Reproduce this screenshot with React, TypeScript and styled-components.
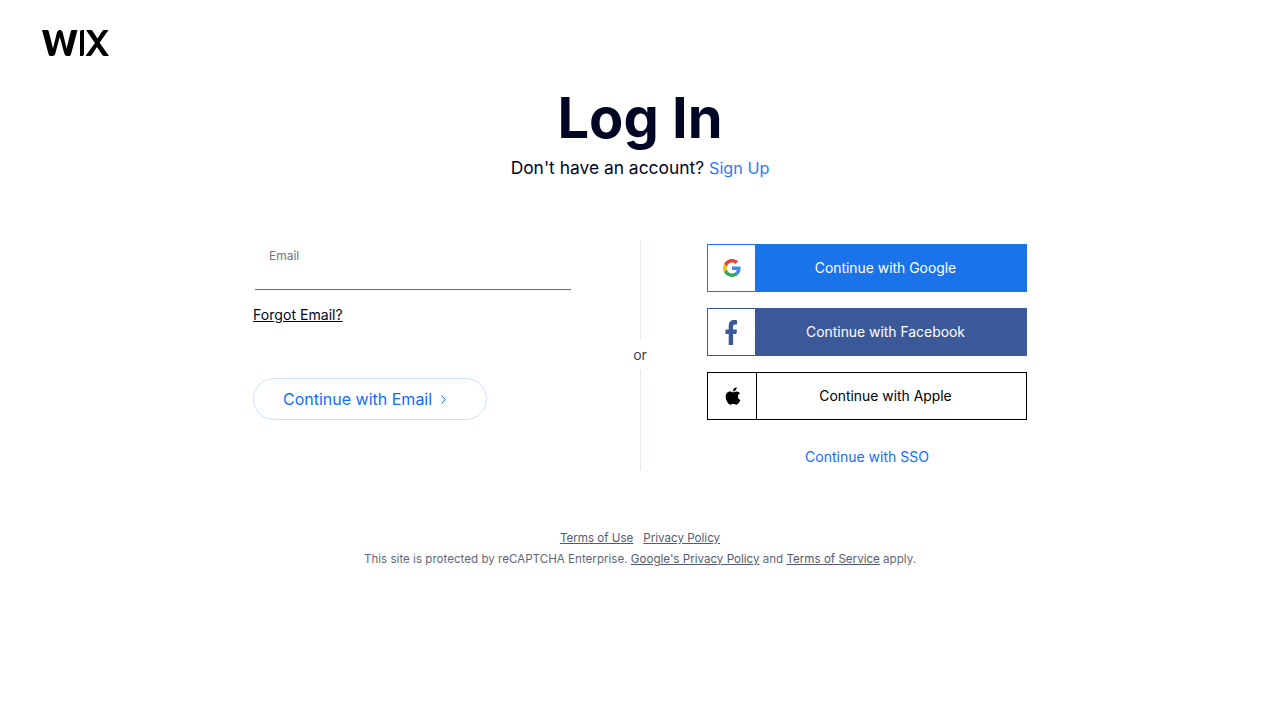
import React from 'react'
import styled, { createGlobalStyle } from 'styled-components'
import { ChevronRight } from 'lucide-react'

const Global = createGlobalStyle`
  html, body { margin: 0; padding: 0; background: #fff; }
  body { font-family: Inter, "Open Sans", sans-serif; color: #000624; }
  a { cursor: pointer; }
`

const Page = styled.div`
  width: 1280px;
  height: 720px;
  overflow: hidden;
  display: flex;
  flex-direction: column;
`

const Logo = styled.svg`
  display: block;
  margin: 30px 0 0 42px;
  flex: none;
`

const Heading = styled.header`
  margin-top: 29px;
  text-align: center;
`

const Title = styled.h1`
  margin: 0;
  font-size: 56px;
  line-height: 66px;
  font-weight: 700;
  color: #000624;
`

const Sub = styled.p`
  margin: 5px 0 0;
  font-size: 17.4px;
  line-height: 24px;
  color: #000624;
`

const SignUp = styled.a`
  color: #2a7bff;
  margin-left: 5px;
  font-size: 16.2px;
`

const Columns = styled.main`
  display: grid;
  grid-template-columns: 320px 134px 320px;
  margin: 60px 0 0 253px;
  height: 230px;
`

const Left = styled.section`
  width: 320px;
`

const Field = styled.div`
  width: 316px;
  height: 50px;
  margin-left: 2px;
  box-sizing: border-box;
  border-bottom: 1px solid #5a6a8c;
  padding: 8px 0 0 14px;
  font-size: 12px;
  line-height: 15px;
  color: #6f7285;
`

const Forgot = styled.a`
  display: block;
  margin-top: 16px;
  font-size: 14.1px;
  line-height: 18px;
  color: #000624;
  text-decoration: underline;
`

const EmailButton = styled.button`
  display: flex;
  align-items: center;
  margin-top: 54px;
  width: 234px;
  height: 42px;
  box-sizing: border-box;
  padding: 0 0 0 29px;
  background: #fff;
  border: 1px solid #cfe0ff;
  border-radius: 21px;
  font-family: inherit;
  font-size: 16px;
  color: #116dff;
  svg { margin-left: 4px; }
`

const Divider = styled.div`
  display: flex;
  flex-direction: column;
  align-items: center;
  width: 134px;
`

const Line = styled.span`
  width: 1px;
  height: 100px;
  background: #e8e9ed;
`

const Or = styled.span`
  height: 30px;
  line-height: 30px;
  font-size: 14px;
  color: #3b4057;
`

const Right = styled.section`
  padding-top: 4px;
  display: flex;
  flex-direction: column;
  gap: 16px;
`

const Social = styled.button`
  display: flex;
  align-items: stretch;
  width: 320px;
  height: 48px;
  padding: 0;
  box-sizing: border-box;
  border: 1px solid ${p => p.$color};
  background: ${p => p.$fill};
  color: ${p => p.$text};
  font-family: inherit;
  font-size: 13.9px;
`

const IconBox = styled.span`
  flex: none;
  width: ${p => (p.$line ? 49 : 47)}px;
  display: flex;
  align-items: center;
  justify-content: center;
  background: #fff;
  box-sizing: border-box;
  border-right: ${p => (p.$line ? '1px solid #000' : 'none')};
  svg { margin-left: ${p => (p.$line ? 2 : 0)}px; }
`

const Label = styled.span`
  flex: 1;
  align-self: center;
  text-align: center;
  padding-right: ${p => p.$pad}px;
`

const Sso = styled.a`
  display: block;
  text-align: center;
  margin-top: 12px;
  font-size: 14px;
  line-height: 18px;
  color: #116dff;
`

const Footer = styled.footer`
  margin-top: 58px;
  text-align: center;
  font-size: 11.6px;
  line-height: 21px;
  color: #63677c;
`

const FootLink = styled.a`
  color: #565a70;
  text-decoration: underline;
  margin-left: ${p => p.$gap || 0}px;
`

export default function App() {
  return (
    <Page>
      <Global />
      <Logo width="67" height="26" viewBox="0 0 67 26" aria-label="Wix">
        <path d="M0 0h5.200c0.800 0 1.300 0.400 1.500 1.200L11 18.500 14.600 3.800C15.100 1.400 16 0 17.800 0c1.800 0 2.700 1.400 3.200 3.800l3.600 14.700L28.800 1.200C29 0.400 29.500 0 30.300 0h5.200L29 24.200c-0.300 1.200-1 1.800-2.200 1.800h-1.500c-1.600 0-2.600-0.800-3-2.500L17.800 6.800 13.300 23.500c-0.400 1.700-1.400 2.500-3 2.500H8.800c-1.200 0-1.900-0.600-2.200-1.800z" />
        <path d="M38 2c0-1.300 0.700-2 2-2h2v24c0 1.300-0.700 2-2 2h-2z" />
        <path d="M44 0h4.600c0.900 0 1.500 0.400 2 1.100L55.500 8.600 60.300 1.100C60.800 0.400 61.400 0 62.300 0H66.500L57.600 12.800 67 26h-4.700c-0.900 0-1.500-0.400-2-1.100L55 17 49.700 24.900C49.200 25.600 48.600 26 47.700 26H43.500L52.900 12.900z" />
      </Logo>

      <Heading>
        <Title>Log In</Title>
        <Sub>
          Don't have an account?<SignUp>Sign Up</SignUp>
        </Sub>
      </Heading>

      <Columns>
        <Left>
          <Field>Email</Field>
          <Forgot>Forgot Email?</Forgot>
          <EmailButton>
            Continue with Email
            <ChevronRight size={15} strokeWidth={1.6} />
          </EmailButton>
        </Left>

        <Divider>
          <Line />
          <Or>or</Or>
          <Line />
        </Divider>

        <Right>
          <Social $color="#1a73e8" $fill="#1a73e8" $text="#fff">
            <IconBox>
              <svg width="18" height="18" viewBox="0 0 48 48">
                <path fill="#EA4335" d="M24 9.500c3.500 0 6.700 1.200 9.200 3.600l6.900-6.900C35.900 2.400 30.500 0 24 0 14.600 0 6.500 5.400 2.600 13.200l8 6.200C12.400 13.700 17.700 9.500 24 9.500z" />
                <path fill="#4285F4" d="M47 24.500c0-1.600-.1-3.100-.4-4.500H24v9h12.900c-.6 3-2.200 5.500-4.800 7.200l7.700 6C44.300 37.900 47 31.800 47 24.500z" />
                <path fill="#FBBC05" d="M10.500 28.600c-.5-1.400-.8-3-.8-4.600s.3-3.200.8-4.600l-8-6.200C.9 16.500 0 20.100 0 24s.9 7.500 2.600 10.800z" />
                <path fill="#34A853" d="M24 48c6.500 0 11.900-2.100 15.900-5.800l-7.700-6c-2.200 1.500-5 2.300-8.200 2.300-6.300 0-11.600-4.200-13.500-9.900l-8 6.200C6.500 42.600 14.600 48 24 48z" />
              </svg>
            </IconBox>
            <Label $pad={10}>Continue with Google</Label>
          </Social>

          <Social $color="#3b5998" $fill="#3b5998" $text="#fff">
            <IconBox>
              <svg width="13" height="25" viewBox="0 0 14 24" preserveAspectRatio="none">
                <path fill="#3b5998" d="M4 24V13.500H0.500V9H4V5.800C4 2 6.200 0 9.600 0c1.400 0 2.900 0.200 3.400 0.300v3.900h-2.200C9 4.200 8.700 5.100 8.700 6.300V9h4.200l-0.600 4.500H8.700V24z" />
              </svg>
            </IconBox>
            <Label $pad={10}>Continue with Facebook</Label>
          </Social>

          <Social $color="#000" $fill="#fff" $text="#000">
            <IconBox $line>
              <svg width="18" height="20" viewBox="0 0 384 512">
                <path fill="#000" d="M318.700 268.700c-.2-36.700 16.400-64.400 50-84.800-18.800-26.900-47.200-41.700-84.700-44.600-35.500-2.800-74.300 20.700-88.500 20.700-15 0-49.400-19.700-76.400-19.700C63.300 141.200 4 184.800 4 273.500q0 39.300 14.400 81.200c12.800 36.700 59 126.700 107.200 125.200 25.200-.6 43-17.900 75.800-17.900 31.800 0 48.300 17.900 76.400 17.900 48.600-.7 90.400-82.500 102.600-119.300-65.200-30.700-61.700-90-61.700-91.900zm-56.600-164.200c27.300-32.400 24.800-61.900 24-72.500-24.100 1.400-52 16.400-67.900 34.900-17.500 19.800-27.800 44.300-25.600 71.900 26.100 2 49.900-11.400 69.500-34.300z" />
              </svg>
            </IconBox>
            <Label $pad={12}>Continue with Apple</Label>
          </Social>

          <Sso>Continue with SSO</Sso>
        </Right>
      </Columns>

      <Footer>
        <div>
          <FootLink>Terms of Use</FootLink>
          <FootLink $gap={10}>Privacy Policy</FootLink>
        </div>
        <div>
          This site is protected by reCAPTCHA Enterprise. <FootLink>Google's Privacy Policy</FootLink> and{' '}
          <FootLink>Terms of Service</FootLink> apply.
        </div>
      </Footer>
    </Page>
  )
}
